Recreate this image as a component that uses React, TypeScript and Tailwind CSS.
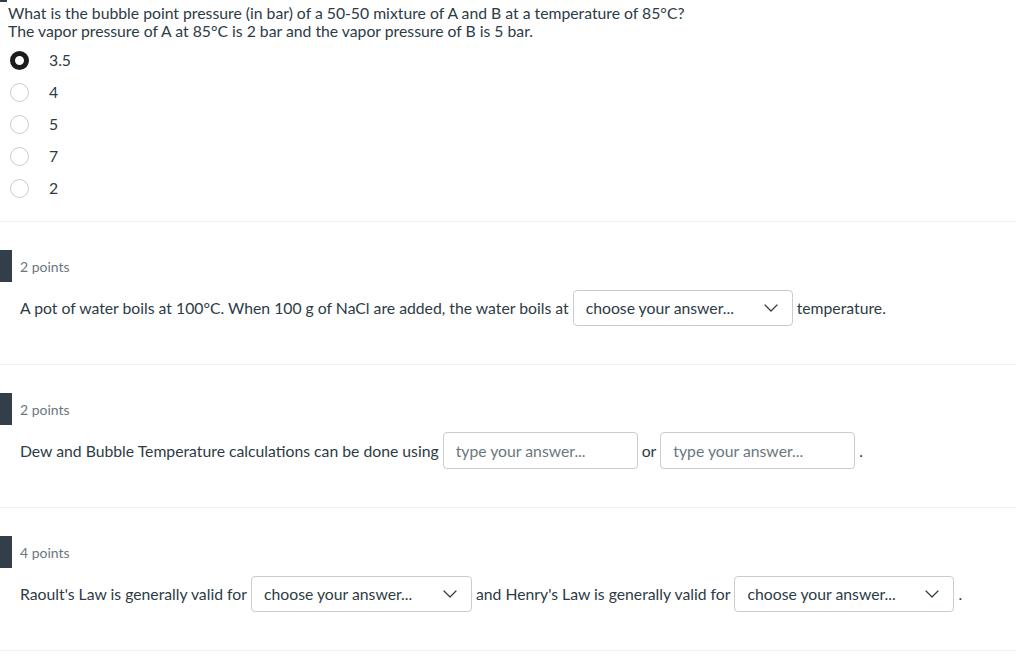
import React from "react";

const textColor = "text-[#2d3b45]";

function Chevron() {
  return (
    <svg width="14" height="8" viewBox="0 0 14 8" fill="none" className="shrink-0">
      <path d="M1 1l6 6 6-6" stroke="#2d3b45" strokeWidth="1.2" strokeLinecap="round" strokeLinejoin="round" />
    </svg>
  );
}

function Select({ w = "w-[220px]" }: { w?: string }) {
  return (
    <span
      className={`mx-[4px] inline-flex h-[36px] ${w} items-center justify-between rounded-[4px] border border-[#c7cdd1] bg-white pl-[12px] pr-[14px] text-[15.75px] text-[#2d3b45]`}
    >
      <span>choose your answer...</span>
      <Chevron />
    </span>
  );
}

function Input() {
  return (
    <span className="mx-[4px] inline-flex h-[37px] w-[195px] items-center rounded-[4px] border border-[#c7cdd1] bg-white pl-[12px] text-[15.75px] text-[#6b7780]">
      type your answer...
    </span>
  );
}

function Section({ points, children }: { points: string; children: React.ReactNode }) {
  return (
    <section className="border-t border-[#eef0f1] pt-[28px] pb-[38px]">
      <div className="flex h-[32px] items-center">
        <div className="h-full w-[12px] bg-[#333e48]" />
        <span className="ml-[8px] text-[14px] text-[#6b7780]">{points}</span>
      </div>
      <div className={`mt-[7px] flex h-[37px] items-center pl-[20px] text-[15.75px] ${textColor}`}>{children}</div>
    </section>
  );
}

function Radio({ label, checked }: { label: string; checked?: boolean }) {
  return (
    <div className="flex h-[32px] items-center">
      <div className="ml-[10px] flex w-[19px] justify-center">
        {checked ? (
          <span className="h-[19px] w-[19px] rounded-full border-[5px] border-[#1c1c1c] bg-white" />
        ) : (
          <span className="h-[19px] w-[19px] rounded-full border border-[#c7cdd1] bg-white" />
        )}
      </div>
      <span className="ml-[20px] text-[15.75px] text-[#2d3b45]">{label}</span>
    </div>
  );
}

export default function App() {
  return (
    <div className="h-[660px] w-[1016px] overflow-hidden bg-white" style={{ fontFamily: "Lato, 'Liberation Sans', sans-serif" }}>
      <div className="h-[2px] w-[7px] bg-[#333e48]" />
      <div className={`pl-[8px] pt-[2px] text-[15.75px] leading-[18px] ${textColor}`}>
        <p>What is the bubble point pressure (in bar) of a 50-50 mixture of A and B at a temperature of 85°C?</p>
        <p>The vapor pressure of A at 85°C is 2 bar and the vapor pressure of B is 5 bar.</p>
      </div>
      <div className="mt-[4px] pb-[17px]">
        <Radio label="3.5" checked />
        <Radio label="4" />
        <Radio label="5" />
        <Radio label="7" />
        <Radio label="2" />
      </div>

      <Section points="2 points">
        <span>A pot of water boils at 100°C. When 100 g of NaCl are added, the water boils at</span>
        <Select />
        <span>temperature.</span>
      </Section>

      <Section points="2 points">
        <span>Dew and Bubble Temperature calculations can be done using</span>
        <Input />
        <span>or</span>
        <Input />
        <span>.</span>
      </Section>

      <Section points="4 points">
        <span>Raoult's Law is generally valid for</span>
        <Select w="w-[221px]" />
        <span>and Henry's Law is generally valid for</span>
        <Select />
        <span>.</span>
      </Section>
      <div className="border-t border-[#eef0f1]" />
    </div>
  );
}
